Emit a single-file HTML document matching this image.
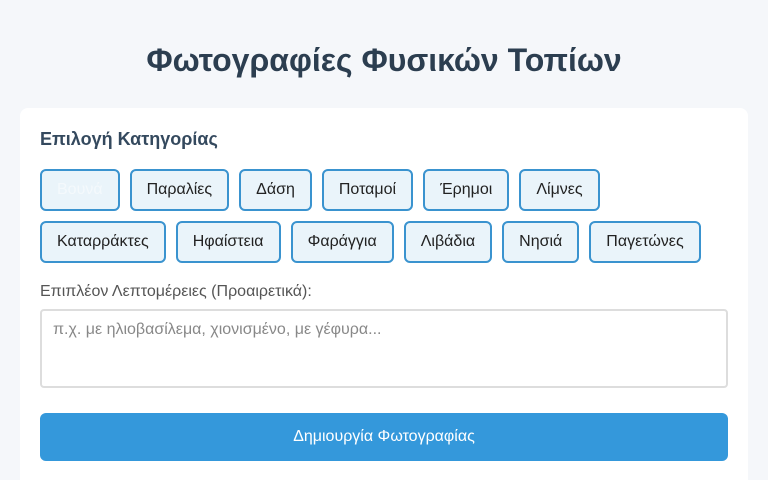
<!DOCTYPE html>
<html><head><meta charset="utf-8"><style>
html,body{margin:0;width:768px;height:480px;overflow:hidden}
body{background:#f5f7fa;font-family:"Liberation Sans",sans-serif;position:relative}
h1{margin:0;position:absolute;top:40px;left:0;width:768px;text-align:center;font-size:32px;color:#2c3e50;line-height:40px}
.card{position:absolute;left:20px;top:108px;width:728px;height:372px;background:#fff;border-radius:8px 8px 0 0}
h2{position:absolute;left:20px;top:19px;margin:0;font-size:18px;color:#34495e;line-height:24px}
.row{position:absolute;left:20px;display:flex;gap:10px}
.b{height:42px;box-sizing:border-box;border:2px solid #3a93cf;background:#eaf4fa;border-radius:6px;padding:0 15px;font-size:16px;line-height:38px;color:#222}
.b.s{color:#f4f9fc}
.lab{position:absolute;left:20px;top:175px;font-size:16px;color:#555}
.ta{position:absolute;left:20px;top:201px;width:688px;height:79px;box-sizing:border-box;border:2px solid #ddd;border-radius:4px;padding:10px 11px;font-size:16px;color:#888}
.go{position:absolute;left:20px;top:305px;width:688px;height:48px;background:#3498db;border-radius:6px;color:#fff;text-align:center;line-height:48px;font-size:16px}
</style></head><body>
<h1>Φωτογραφίες Φυσικών Τοπίων</h1>
<div class="card">
<h2>Επιλογή Κατηγορίας</h2>
<div class="row" style="top:61px"><div class="b s">Βουνά</div><div class="b">Παραλίες</div><div class="b">Δάση</div><div class="b">Ποταμοί</div><div class="b">Έρημοι</div><div class="b">Λίμνες</div></div>
<div class="row" style="top:113px"><div class="b">Καταρράκτες</div><div class="b">Ηφαίστεια</div><div class="b">Φαράγγια</div><div class="b">Λιβάδια</div><div class="b">Νησιά</div><div class="b">Παγετώνες</div></div>
<div class="lab">Επιπλέον Λεπτομέρειες (Προαιρετικά):</div>
<div class="ta">π.χ. με ηλιοβασίλεμα, χιονισμένο, με γέφυρα...</div>
<div class="go">Δημιουργία Φωτογραφίας</div>
</div>
</body></html>
